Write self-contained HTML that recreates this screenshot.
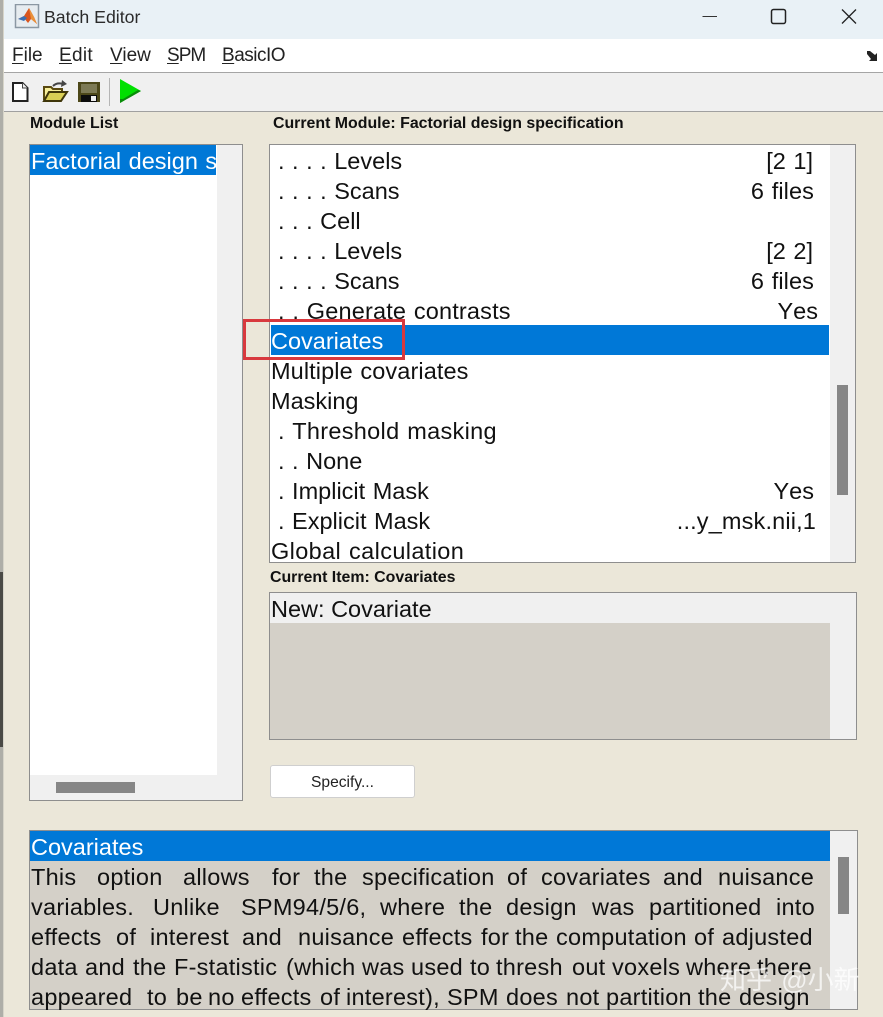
<!DOCTYPE html>
<html><head><meta charset="utf-8"><style>
html,body{margin:0;padding:0;width:883px;height:1017px;overflow:hidden;background:#ebe7d9;}
*{box-sizing:border-box;}
body{font-family:"Liberation Sans",sans-serif;color:#111;position:relative;}
.a{position:absolute;}
.t{position:absolute;font-size:23.5px;line-height:30px;height:30px;white-space:pre;word-spacing:1px;}
.r{font-kerning:none;}
.b{position:absolute;font-size:15.9px;font-weight:bold;line-height:20px;white-space:pre;color:#111;}
.m{position:absolute;font-size:19px;line-height:24px;top:44px;color:#222;white-space:pre;}
.m u{text-underline-offset:2px;text-decoration-thickness:1px;}
.l{position:absolute;left:0;width:830px;height:30px;font-size:23.5px;line-height:30px;letter-spacing:.25px;}
.l span{position:absolute;top:0;white-space:pre;}
</style></head><body>
<!-- desktop edge -->
<div class="a" style="left:0;top:0;width:3px;height:1017px;background:#aeaea8"></div>
<div class="a" style="left:0;top:572px;width:3px;height:175px;background:#4a4a46"></div>
<div class="a" style="left:3px;top:0;width:1px;height:1017px;background:#d6d4c9"></div>
<!-- title bar -->
<div class="a" style="left:4px;top:0;width:879px;height:39px;background:#e9f1f6"></div>
<svg class="a" style="left:14px;top:4px" width="26" height="25" viewBox="0 0 26 25"><rect x="1.500" y="0.500" width="23" height="23" fill="#e6ecf0" stroke="#8b98a3" stroke-width="1.500"/><path d="M4 15l6-3 5-8 5 9 3 7-6-5-3 4-4-5z" fill="#d9561f"/><path d="M4 15l6-3 3 2-3 3z" fill="#3a70b5"/><path d="M15 4l5 9 3 7-6-5z" fill="#e9913a"/></svg>
<div class="a" style="left:44px;top:5px;font-size:17.700px;line-height:24px;color:#2b2b2b">Batch Editor</div>
<svg class="a" style="left:700px;top:8px" width="170" height="20" viewBox="0 0 170 20"><path d="M2.500 8.500H17" stroke="#333" fill="none"/><rect x="71.500" y="1.500" width="14" height="14" rx="2" fill="none" stroke="#222" stroke-width="1.500"/><path d="M142 1.500l14 14M156 1.500l-14 14" stroke="#222" stroke-width="1.300" fill="none"/></svg>
<!-- menu -->
<div class="a" style="left:4px;top:39px;width:879px;height:33px;background:#fff"></div>
<div class="a" style="left:4px;top:72px;width:879px;height:1px;background:#a5a5a5"></div>
<div class="m" style="left:12px"><u>F</u>ile</div>
<div class="m" style="left:59px;letter-spacing:.3px"><u>E</u>dit</div>
<div class="m" style="left:110px"><u>V</u>iew</div>
<div class="m" style="left:167px;letter-spacing:-1px"><u>S</u>PM</div>
<div class="m" style="left:222px;letter-spacing:-.5px"><u>B</u>asicIO</div>
<svg class="a" style="left:866px;top:50px" width="13" height="12" viewBox="0 0 13 12"><path d="M1 1l3 0 5 4 2-2v8H3l2-2-4-5z" fill="#222"/></svg>
<!-- toolbar -->
<div class="a" style="left:4px;top:73px;width:879px;height:38px;background:#f0f0f0"></div>
<div class="a" style="left:4px;top:111px;width:879px;height:1px;background:#a0a0a0"></div>
<svg class="a" style="left:10px;top:78px" width="135" height="28" viewBox="0 0 135 28">
<path d="M3 5h9.500l5 5v13H3z" fill="#fff" stroke="#222" stroke-width="2"/><path d="M12.500 5v5h5" fill="#eee" stroke="#444"/>
<path d="M34 22V9h7l2 2h9v4" fill="#f7ef9a" stroke="#5a4a10" stroke-width="2"/><path d="M34 23l5-9h18l-6 9z" fill="#d9cf55" stroke="#3f360a" stroke-width="2"/><path d="M43 8q4-4 10-2" fill="none" stroke="#444" stroke-width="2"/><path d="M52 2l5 4-6 3z" fill="#444"/>
<rect x="68" y="4" width="22" height="20" fill="#4c4719"/><rect x="71" y="6" width="16" height="9" fill="#7d7a55"/><rect x="71" y="17" width="16" height="7" fill="#0c0c0c"/><rect x="81" y="18" width="5" height="5" fill="#eee"/>
<rect x="99" y="-2" width="1" height="30" fill="#b5b5b5"/>
<path d="M110 1l21 12-21 12z" fill="#00e000"/><path d="M110 25l21-12-3-1-15 9-3 0z" fill="#0a8a0a"/>
</svg>
<!-- headings -->
<div class="b" style="left:30px;top:114px">Module List</div>
<div class="b" style="left:273px;top:114px">Current Module: Factorial design specification</div>
<div class="b" style="left:270px;top:568px">Current Item: Covariates</div>
<!-- module list -->
<div class="a" style="left:29px;top:144px;width:214px;height:657px;background:#f0f0f0;border:1px solid #8e8e8e"></div>
<div class="a" style="left:30px;top:145px;width:187px;height:630px;background:#fff"></div>
<div class="a" style="left:30px;top:145px;width:186px;height:30px;background:#0078d7;overflow:hidden"><div class="t" style="left:1px;top:1px;color:#fff">Factorial design specification</div></div>
<div class="a" style="left:56px;top:782px;width:79px;height:11px;background:#868686"></div>
<!-- current module -->
<div class="a" style="left:269px;top:144px;width:587px;height:419px;background:#f0f0f0;border:1px solid #8e8e8e"></div>
<div class="a" style="left:270px;top:145px;width:560px;height:417px;background:#fff"></div>
<div class="a" style="left:837px;top:385px;width:11px;height:110px;background:#868686"></div>
<div class="a" style="left:271px;top:325px;width:558px;height:30px;background:#0078d7"></div>
<div class="t" style="left:278px;top:146px">. . . . Levels</div>
<div class="t" style="left:278px;top:176px">. . . . Scans</div>
<div class="t" style="left:278px;top:206px">. . . Cell</div>
<div class="t" style="left:278px;top:236px">. . . . Levels</div>
<div class="t" style="left:278px;top:266px">. . . . Scans</div>
<div class="t" style="left:278px;top:296px;letter-spacing:.17px">. . Generate contrasts</div>
<div class="t" style="left:271px;top:326px;color:#fff">Covariates</div>
<div class="t" style="left:271px;top:356px;letter-spacing:.1px">Multiple covariates</div>
<div class="t" style="left:271px;top:386px">Masking</div>
<div class="t" style="left:278px;top:416px;letter-spacing:.3px">. Threshold masking</div>
<div class="t" style="left:278px;top:446px">. . None</div>
<div class="t" style="left:278px;top:476px">. Implicit Mask</div>
<div class="t" style="left:278px;top:506px">. Explicit Mask</div>
<div class="a" style="left:271px;top:536px;width:400px;height:26px;overflow:hidden"><div class="t" style="left:0;top:0;letter-spacing:.37px">Global calculation</div></div>
<div class="t" style="right:70px;top:146px">[2 1]</div>
<div class="t" style="right:69px;top:176px;letter-spacing:.1px">6 files</div>
<div class="t" style="right:70px;top:236px">[2 2]</div>
<div class="t" style="right:69px;top:266px;letter-spacing:.1px">6 files</div>
<div class="t r" style="right:65px;top:296px">Yes</div>
<div class="t r" style="right:69px;top:476px">Yes</div>
<div class="t" style="right:67px;top:506px;letter-spacing:.15px">...y_msk.nii,1</div>
<!-- current item -->
<div class="a" style="left:269px;top:592px;width:588px;height:148px;background:#f0f0f0;border:1px solid #8e8e8e"></div>
<div class="a" style="left:270px;top:623px;width:560px;height:116px;background:#d4d0c8"></div>
<div class="t" style="left:271px;top:594px;word-spacing:0">New: Covariate</div>
<!-- button -->
<div class="a" style="left:270px;top:765px;width:145px;height:33px;background:#fff;border:1px solid #cfcfcf;border-radius:3px;text-align:center;font-size:15.600px;line-height:33px;color:#222">Specify...</div>
<!-- description -->
<div class="a" style="left:29px;top:830px;width:829px;height:180px;background:#f0f0f0;border:1px solid #8e8e8e"></div>
<div class="a" style="left:30px;top:831px;width:800px;height:178px;background:#d4d0c8"></div>
<div class="a" style="left:30px;top:831px;width:800px;height:30px;background:#0078d7"></div>
<div class="t" style="left:31px;top:832px;color:#fff">Covariates</div>
<div class="a" style="left:838px;top:857px;width:11px;height:57px;background:#868686"></div>
<div class="l" style="top:862px"><span style="left:31px">This</span> <span style="left:97px">option</span> <span style="left:183px">allows</span> <span style="left:272px">for</span> <span style="left:314px">the</span> <span style="left:362px">specification</span> <span style="left:507px">of</span> <span style="left:541px">covariates</span> <span style="left:663px">and</span> <span style="left:718px">nuisance</span></div>
<div class="l" style="top:892px"><span style="left:31px">variables.</span> <span style="left:153px">Unlike</span> <span style="left:241px">SPM94/5/6,</span> <span style="left:380px">where</span> <span style="left:459px">the</span> <span style="left:506px">design</span> <span style="left:592px">was</span> <span style="left:649px">partitioned</span> <span style="left:776px">into</span></div>
<div class="l" style="top:922px"><span style="left:31px">effects</span> <span style="left:116px">of</span> <span style="left:150px">interest</span> <span style="left:242px">and</span> <span style="left:298px">nuisance</span> <span style="left:402px">effects</span> <span style="left:481px">for</span> <span style="left:515px">the</span> <span style="left:556px">computation</span> <span style="left:694px">of</span> <span style="left:722px">adjusted</span></div>
<div class="l" style="top:952px"><span style="left:31px">data</span> <span style="left:85px">and</span> <span style="left:133px">the</span> <span style="left:174px">F-statistic</span> <span style="left:286px">(which</span> <span style="left:362px">was</span> <span style="left:411px">used</span> <span style="left:470px">to</span> <span style="left:496px">thresh</span> <span style="left:572px">out</span> <span style="left:612px">voxels</span> <span style="left:686px">where</span> <span style="left:757px">there</span></div>
<div class="l" style="top:982px"><span style="left:31px">appeared</span> <span style="left:147px">to</span> <span style="left:176px">be</span> <span style="left:208px">no</span> <span style="left:241px">effects</span> <span style="left:320px">of</span> <span style="left:346px">interest),</span> <span style="left:447px">SPM</span> <span style="left:506px">does</span> <span style="left:566px">not</span> <span style="left:606px">partition</span> <span style="left:698px">the</span> <span style="left:739px">design</span></div>
<!-- red highlight -->
<div class="a" style="left:243px;top:319px;width:162px;height:41px;border:3px solid #d8393e"></div>
<!-- watermark -->
<div class="a" style="left:720px;top:965px;font-family:'Liberation Sans','Noto Sans CJK SC',sans-serif;font-size:26px;line-height:30px;word-spacing:2px;color:rgba(255,255,255,.72);white-space:pre">知乎 @小新</div>
</body></html>
